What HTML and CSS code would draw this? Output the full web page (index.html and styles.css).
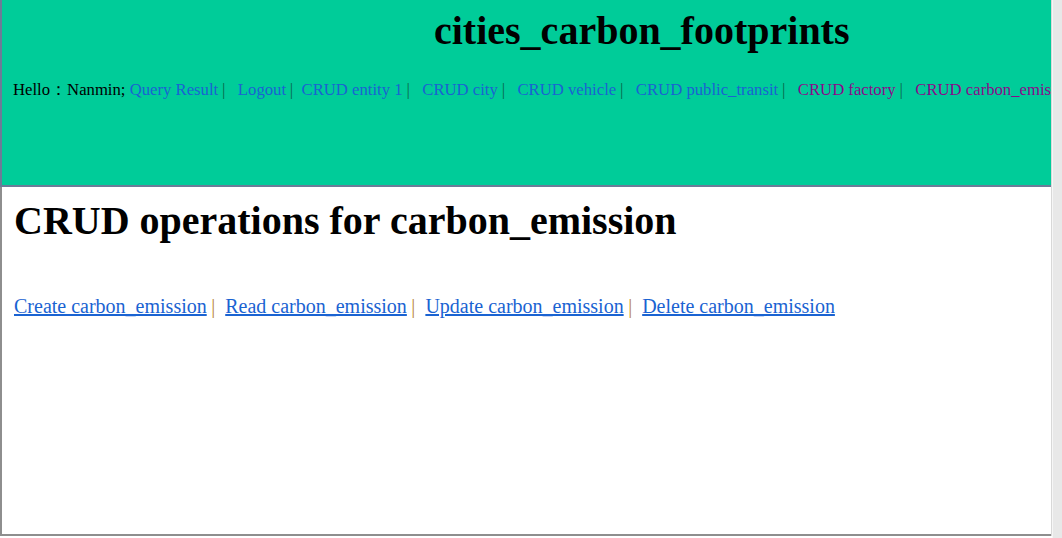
FILE: index.html
```html
<!DOCTYPE html>
<html>
<head>
<meta charset="utf-8">
<title>cities_carbon_footprints</title>
<link rel="stylesheet" href="styles.css">
</head>
<body>
<div class="window">
  <div class="frames">
    <div class="top-frame">
      <h1 class="site-title">cities_carbon_footprints</h1>
      <p class="nav">Hello：Nanmin; <a href="#" class="link">Query Result</a><span class="sep">|</span>&nbsp;&nbsp; <a href="#" class="link">Logout</a><span class="sep">|</span>&nbsp; <a href="#" class="link">CRUD entity 1</a><span class="sep">|</span>&nbsp;&nbsp; <a href="#" class="link">CRUD city</a><span class="sep">|</span>&nbsp;&nbsp; <a href="#" class="link">CRUD vehicle</a><span class="sep">|</span>&nbsp;&nbsp; <a href="#" class="link">CRUD public_transit</a><span class="sep">|</span>&nbsp;&nbsp; <a href="#" class="visited">CRUD factory</a><span class="sep">|</span>&nbsp;&nbsp; <a href="#" class="visited">CRUD carbon_emission</a><span class="sep">|</span></p>
    </div>
    <div class="main-frame">
      <h1 class="page-title">CRUD operations for carbon_emission</h1>
      <p class="ops"><a href="#" class="op">Create carbon_emission</a><span class="op-sep">|</span>&nbsp; <a href="#" class="op">Read carbon_emission</a><span class="op-sep">|</span>&nbsp; <a href="#" class="op">Update carbon_emission</a><span class="op-sep">|</span>&nbsp; <a href="#" class="op">Delete carbon_emission</a></p>
    </div>
  </div>
  <div class="scroll-strip"></div>
</div>
</body>
</html>
```
FILE: styles.css
```css
html, body {
  margin: 0;
  padding: 0;
  background: #ffffff;
  font-family: "Liberation Serif", "Times New Roman", serif;
}
.window {
  display: flex;
  width: 1062px;
  height: 538px;
  overflow: hidden;
}
.frames {
  width: 1051px;
  height: 536px;
  display: flex;
  flex-direction: column;
  border-right: 1px solid #d8d8d8;
}
.top-frame {
  height: 185px;
  background: #00cc99;
  border-left: 2px solid #6b7c98;
  border-bottom: 2px solid #6b7c98;
  overflow: hidden;
  white-space: nowrap;
}
.site-title {
  margin: 0;
  padding: 8px 0 0 432px;
  font-size: 40px;
  line-height: 46px;
  font-weight: bold;
  color: #000;
}
.nav {
  margin: 26px 0 0 11px;
  font-size: 16.7px;
  line-height: 20px;
  color: #000;
}
.link {
  color: #1a63d2;
  text-decoration: none;
}
.visited {
  color: #8a0a8a;
  text-decoration: none;
}
.sep {
  color: #0a6a4a;
  margin-left: 3.8px;
}
.main-frame {
  flex: 1;
  border-left: 2px solid #8e8e8e;
  border-bottom: 2px solid #8e8e8e;
  padding: 0 0 0 12px;
}
.page-title {
  margin: 11px 0 0 0;
  font-size: 40px;
  line-height: 46px;
  font-weight: bold;
  color: #000;
}
.ops {
  margin: 50px 0 0 0;
  font-size: 20px;
  line-height: 24px;
}
.op {
  color: #1a63d2;
  text-decoration: underline;
}
.op-sep {
  color: #b8823a;
  margin-left: 4.5px;
}
.scroll-strip {
  width: 10px;
  height: 538px;
  background: #e8e8e8;
  border-left: 1px solid #f6f6f6;
}
```
